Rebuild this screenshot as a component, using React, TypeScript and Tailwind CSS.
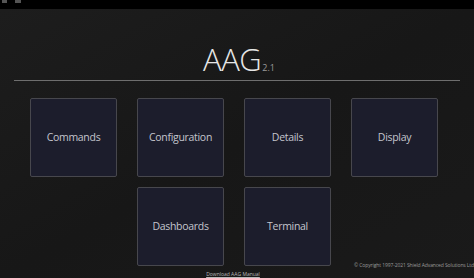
import React from 'react';

const tiles = [
  { label: 'Commands', className: '' },
  { label: 'Configuration', className: '' },
  { label: 'Details', className: '' },
  { label: 'Display', className: '' },
  { label: 'Dashboards', className: 'col-start-2' },
  { label: 'Terminal', className: 'col-start-3' },
];

export default function App() {
  return (
    <div className="flex h-[278px] w-full flex-col overflow-hidden bg-[#181818] font-['Open_Sans',sans-serif]">
      {/* window strip */}
      <div className="flex h-[9px] shrink-0 items-start gap-[8px] bg-black pl-[2px]">
        <span className="h-[3px] w-[5px] bg-[#555]" />
        <span className="h-[3px] w-[6px] bg-[#555]" />
      </div>

      <main className="flex flex-1 flex-col bg-gradient-to-br from-[#1d1d1d] via-[#171717] to-[#1a1a1a]">
        {/* title */}
        <div className="mt-[35px] flex items-baseline justify-center pl-[4px]">
          <span className="text-[31px] font-light leading-none tracking-[-0.5px] text-[#e6e6e6]">AAG</span>
          <span className="ml-[1px] text-[9px] leading-none text-[#9a9a9a]">2.1</span>
        </div>
        <div className="mx-[14px] mt-[5px] h-px bg-[#6e6e6e]" />

        {/* tiles */}
        <div className="mt-[17px] ml-[30px] grid grid-cols-[repeat(4,87px)] gap-x-[20px] gap-y-[10px]">
          {tiles.map((t) => (
            <button
              key={t.label}
              className={`flex h-[79px] items-center justify-center rounded-[2px] border border-[#47474d] bg-[#1c1d2c] text-[10.5px] tracking-[-0.3px] text-[#c4c5cd] ${t.className}`}
            >
              {t.label}
            </button>
          ))}
        </div>

        {/* footer */}
        <div className="mt-[-3px] flex justify-end whitespace-nowrap text-[5px] leading-none tracking-[-0.1px] text-[#9a9a9a]">
          <span>© Copyright 1997-2021 Shield Advanced Solutions Ltd</span>
        </div>
        <div className="mt-[4px] flex justify-center pr-[8px] text-[5px] leading-none">
          <a className="text-[#b8b8b8] underline">Download AAG Manual</a>
        </div>
      </main>
    </div>
  );
}
